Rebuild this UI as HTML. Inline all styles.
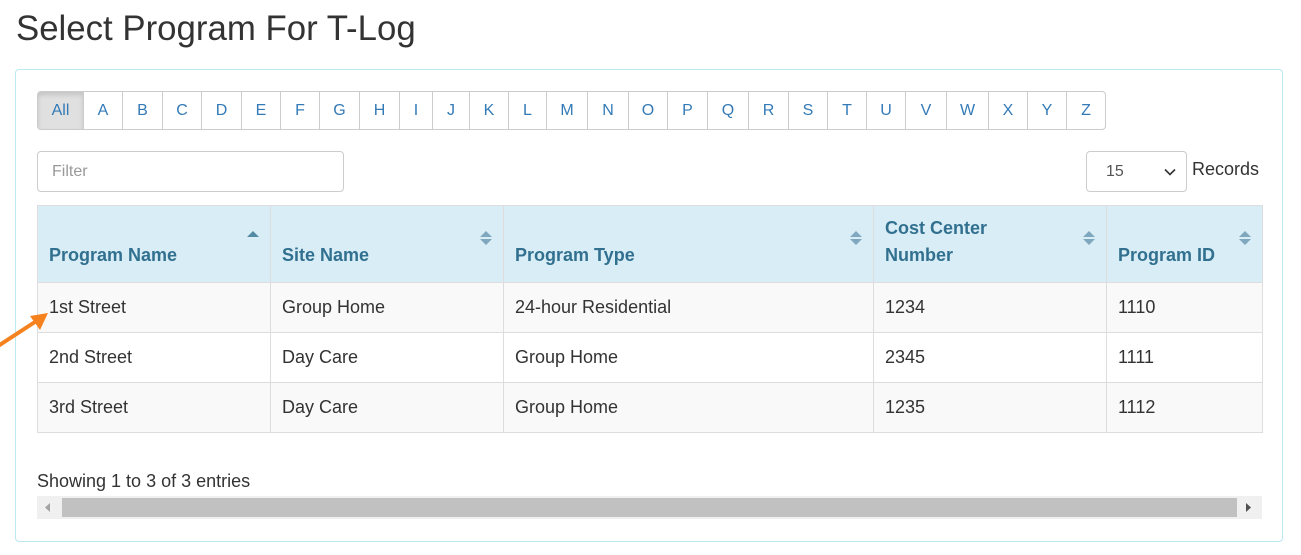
<!DOCTYPE html>
<html><head><style>
body{margin:0;background:#fff;font-family:"Liberation Sans",Arial,sans-serif;color:#333;width:1301px;height:555px;position:relative;overflow:hidden}
h1{position:absolute;left:16px;top:9px;margin:0;font-size:34.8px;font-weight:400;color:#333}
.panel{position:absolute;left:15px;top:69px;width:1266px;height:471px;border:1px solid #bce8f1;border-radius:4px}
.letters{position:absolute;left:37px;top:91px;height:39px;display:flex}
.letters span{display:block;box-sizing:border-box;flex:none;height:39px;line-height:37px;text-align:center;border:1px solid #ccc;margin-left:-1px;color:#337ab7;font-size:16px;background:#fff}
.letters span:first-child{border-radius:4px 0 0 4px;background:#e0e0e0;box-shadow:inset 0 3px 5px rgba(0,0,0,.125);margin-left:0}
.letters span:last-child{border-radius:0 4px 4px 0}
.filter{position:absolute;left:37px;top:151px;border:1px solid #ccc;border-radius:4px;box-sizing:border-box;width:307px;height:41px;padding-left:14px;line-height:39px;color:#999;font-size:16px}
.sel{position:absolute;left:1086px;top:151px;width:101px;height:41px;box-sizing:border-box;border:1px solid #ccc;border-radius:4px;font-size:16px;line-height:39px;padding-left:19px;color:#555}
.rec{position:absolute;left:1192px;top:159px;font-size:18px;color:#333}
table{position:absolute;left:37px;top:205px;border-collapse:collapse;font-size:18px}
td,th{border:1px solid #ddd;padding:0 11px;text-align:left;box-sizing:border-box}
th{background:#d9edf7;color:#31708f;font-weight:700;height:77px;vertical-align:bottom;padding-bottom:13px;position:relative;line-height:27px}
td{height:50px;background:#f9f9f9}
tr:nth-child(3) td{background:#fff}
.s{position:absolute;right:11px;top:23px;width:12px;height:18px}
.show{position:absolute;left:37px;top:471px;font-size:18px}
.sb{position:absolute;left:37px;top:496px;width:1225px;height:23px;background:#f0f0f0}
.th{position:absolute;left:25px;top:2px;width:1175px;height:19px;background:#c1c1c1}
</style></head><body>
<h1>Select Program For T-Log</h1>
<div class="panel"></div>
<div class="letters">
<span style="width:47px">All</span><span style="width:40px">A</span><span style="width:41px">B</span><span style="width:40px">C</span><span style="width:41px">D</span><span style="width:40px">E</span><span style="width:40px">F</span><span style="width:41px">G</span><span style="width:41px">H</span><span style="width:34px">I</span><span style="width:38px">J</span><span style="width:40px">K</span><span style="width:39px">L</span><span style="width:42px">M</span><span style="width:42px">N</span><span style="width:40px">O</span><span style="width:41px">P</span><span style="width:42px">Q</span><span style="width:41px">R</span><span style="width:40px">S</span><span style="width:40px">T</span><span style="width:40px">U</span><span style="width:42px">V</span><span style="width:43px">W</span><span style="width:40px">X</span><span style="width:40px">Y</span><span style="width:40px">Z</span>
</div>
<div class="filter">Filter</div>
<div class="sel">15<svg style="position:absolute;right:10px;top:16px" width="12" height="8" viewBox="0 0 12 8"><path d="M1 1.5L6 6.5L11 1.5" fill="none" stroke="#333" stroke-width="1.6"/></svg></div>
<div class="rec">Records</div>
<table>
<tr><th style="width:233px">Program Name<svg class="s" viewBox="0 0 12 18"><path d="M0 8L6 2L12 8Z" fill="#31708f" opacity=".8"/></svg></th>
<th style="width:233px">Site Name<svg class="s" viewBox="0 0 12 18"><path d="M0 8L6 2L12 8ZM0 10L6 16L12 10Z" fill="#7fa7bd"/></svg></th>
<th style="width:370px">Program Type<svg class="s" viewBox="0 0 12 18"><path d="M0 8L6 2L12 8ZM0 10L6 16L12 10Z" fill="#7fa7bd"/></svg></th>
<th style="width:233px">Cost Center<br>Number<svg class="s" viewBox="0 0 12 18"><path d="M0 8L6 2L12 8ZM0 10L6 16L12 10Z" fill="#7fa7bd"/></svg></th>
<th style="width:156px">Program ID<svg class="s" viewBox="0 0 12 18"><path d="M0 8L6 2L12 8ZM0 10L6 16L12 10Z" fill="#7fa7bd"/></svg></th></tr>
<tr><td>1st Street</td><td>Group Home</td><td>24-hour Residential</td><td>1234</td><td>1110</td></tr>
<tr><td>2nd Street</td><td>Day Care</td><td>Group Home</td><td>2345</td><td>1111</td></tr>
<tr><td>3rd Street</td><td>Day Care</td><td>Group Home</td><td>1235</td><td>1112</td></tr>
</table>
<div class="show">Showing 1 to 3 of 3 entries</div>
<div class="sb"><div class="th"></div>
<svg style="position:absolute;left:8px;top:7px" width="6" height="9"><path d="M5 0L0 4.5L5 9Z" fill="#a3a3a3"/></svg>
<svg style="position:absolute;right:10px;top:7px" width="6" height="9"><path d="M0 0L5 4.5L0 9Z" fill="#505050"/></svg></div>
<svg style="position:absolute;left:0;top:308px" width="60" height="45"><path d="M-2 38L38 12" stroke="#f5821f" stroke-width="4"/><path d="M48 5L30 8L40 22Z" fill="#f5821f"/></svg>
</body></html>
